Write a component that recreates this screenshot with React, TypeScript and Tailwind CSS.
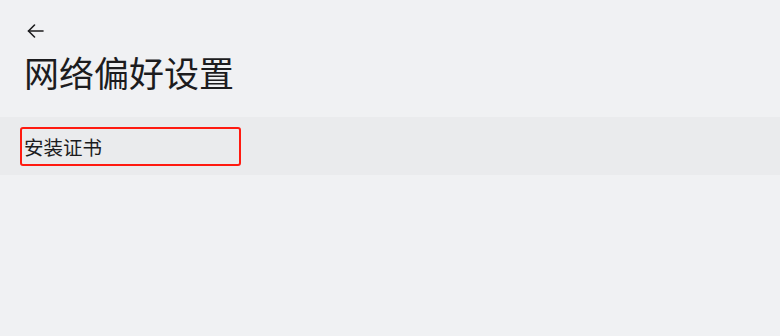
export default function App() {
  return (
    <div
      className="w-[780px] h-[336px] bg-[#f0f1f3] text-[#1c1c1e] overflow-hidden"
      style={{ fontFamily: '"Noto Sans CJK SC", "Noto Sans", sans-serif' }}
    >
      <div className="pl-[27px] pt-[24px] h-[14px] box-content">
        <svg width="17" height="14" viewBox="0 0 17 14" fill="none" stroke="#1c1c1e" strokeWidth="1.6" strokeLinecap="round" strokeLinejoin="round">
          <path d="M16 7H1.5" />
          <path d="M7.5 1L1.5 7l6 6" />
        </svg>
      </div>
      <h1 className="pl-[24px] mt-[12px] text-[35px] leading-[44px] font-normal">网络偏好设置</h1>
      <div className="mt-[23px] h-[58px] bg-[#eaebed] pt-[10px]">
        <div className="ml-[20px] w-[221px] h-[39px] border-2 border-[#ff1a10] rounded-[3px] flex items-center pl-[2px]">
          <span className="text-[19.5px] leading-none">安装证书</span>
        </div>
      </div>
    </div>
  );
}
